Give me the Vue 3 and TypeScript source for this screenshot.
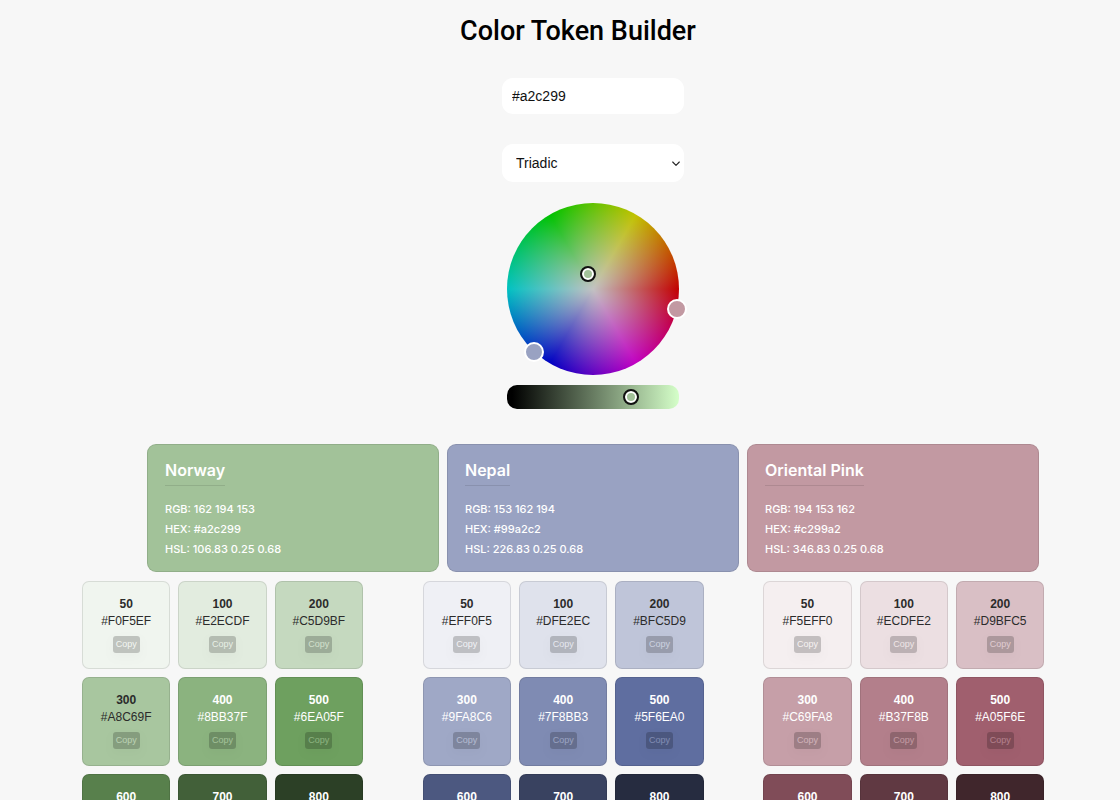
<script setup lang="ts">
import { computed, ref } from 'vue'

interface Swatch {
  step: number
  hex: string
  ink: string
}

interface Palette {
  name: string
  base: string
  rgb: string
  hsl: string
  swatches: Swatch[]
}

const STEPS = [50, 100, 200, 300, 400, 500, 600, 700, 800]

function shades(hexes: string[], darkInkCount: number): Swatch[] {
  return hexes.map((hex, i) => ({
    step: STEPS[i],
    hex,
    ink: i < darkInkCount ? '#2b2b2b' : '#ffffff',
  }))
}

const palettes: Palette[] = [
  {
    name: 'Norway',
    base: '#a2c299',
    rgb: '162 194 153',
    hsl: '106.83 0.25 0.68',
    swatches: shades(
      ['#F0F5EF', '#E2ECDF', '#C5D9BF', '#A8C69F', '#8BB37F', '#6EA05F', '#58804C', '#426039', '#2C4026'],
      4,
    ),
  },
  {
    name: 'Nepal',
    base: '#99a2c2',
    rgb: '153 162 194',
    hsl: '226.83 0.25 0.68',
    swatches: shades(
      ['#EFF0F5', '#DFE2EC', '#BFC5D9', '#9FA8C6', '#7F8BB3', '#5F6EA0', '#4C5880', '#394260', '#262C40'],
      3,
    ),
  },
  {
    name: 'Oriental Pink',
    base: '#c299a2',
    rgb: '194 153 162',
    hsl: '346.83 0.25 0.68',
    swatches: shades(
      ['#F5EFF0', '#ECDFE2', '#D9BFC5', '#C69FA8', '#B37F8B', '#A05F6E', '#804C58', '#603942', '#40262C'],
      3,
    ),
  },
]

const hex = ref('#a2c299')
const harmony = ref('Triadic')
const harmonies = ['Triadic', 'Complementary', 'Analogous', 'Tetradic']
const brightness = ref(76)
const thumbLeft = computed(() => `calc(12px + (100% - 24px) * ${brightness.value / 100})`)

function copy(value: string) {
  navigator.clipboard?.writeText(value)
}
</script>

<template>
  <main class="page">
    <h1 class="title">Color Token Builder</h1>

    <section class="controls">
      <input v-model="hex" class="hex-input" type="text" aria-label="Base color" />
      <div class="select-wrap">
        <select v-model="harmony" class="harmony" aria-label="Harmony">
          <option v-for="h in harmonies" :key="h">{{ h }}</option>
        </select>
        <svg class="chevron" viewBox="0 0 8 6" aria-hidden="true">
          <path d="M.7 1 4 4.3 7.3 1" fill="none" stroke="#222" stroke-width="1.1" stroke-linecap="round" stroke-linejoin="round" />
        </svg>
      </div>
      <div class="wheel">
        <span class="pin pin-second"></span>
        <span class="pin pin-third"></span>
        <span class="handle handle-wheel"></span>
      </div>
      <div class="slider">
        <input v-model="brightness" class="range" type="range" min="0" max="100" aria-label="Brightness" />
        <span class="handle handle-slider" :style="{ left: thumbLeft }"></span>
      </div>
    </section>

    <section class="cards">
      <article v-for="p in palettes" :key="p.name" class="card" :style="{ backgroundColor: p.base }">
        <h2 class="card-title">{{ p.name }}</h2>
        <p class="fact">RGB: {{ p.rgb }}</p>
        <p class="fact">HEX: {{ p.base }}</p>
        <p class="fact">HSL: {{ p.hsl }}</p>
      </article>
    </section>

    <section class="palettes">
      <div v-for="p in palettes" :key="p.name" class="palette">
        <div
          v-for="s in p.swatches"
          :key="s.step"
          class="swatch"
          :style="{ backgroundColor: s.hex, color: s.ink }"
        >
          <strong>{{ s.step }}</strong>
          <span>{{ s.hex }}</span>
          <button class="copy" type="button" @click="copy(s.hex)">Copy</button>
        </div>
      </div>
    </section>
  </main>
</template>

<style>
html {
  background: #f7f7f7;
}
body {
  margin: 0;
}
</style>

<style scoped>
.page {
  box-sizing: border-box;
  padding: 14px 16px 16px 82px;
  font-family: Inter, sans-serif;
  color: #000;
}
.title {
  margin: 0 30px 0 0;
  font-family: Roboto, Inter, sans-serif;
  font-size: 27px;
  font-weight: 500;
  line-height: 34px;
  text-align: center;
}
.controls {
  display: flex;
  flex-direction: column;
  align-items: center;
  margin-top: 30px;
}
.hex-input,
.harmony {
  box-sizing: border-box;
  display: block;
  width: 182px;
  border: 0;
  border-radius: 11px;
  background: #fff;
  color: #111;
  font-family: "Liberation Sans", Arial, sans-serif;
  font-size: 14px;
}
.hex-input {
  height: 36px;
  padding: 0 10px;
}
.select-wrap {
  position: relative;
  margin-top: 30px;
}
.harmony {
  appearance: none;
  padding: 0 20px 0 14px;
  height: 38px;
}
.chevron {
  position: absolute;
  right: 4px;
  top: 17px;
  width: 8px;
  height: 6px;
  pointer-events: none;
}
.wheel {
  position: relative;
  width: 172px;
  height: 172px;
  margin-top: 21px;
  border-radius: 50%;
  background:
    radial-gradient(closest-side, #c2c2c2, rgba(194, 194, 194, 0)),
    conic-gradient(from 90deg, #c20000, #c200c2, #0000c2, #00c2c2, #00c200, #c2c200, #c20000);
}
.pin,
.handle {
  position: absolute;
  box-sizing: border-box;
  border-radius: 50%;
  transform: translate(-50%, -50%);
  pointer-events: none;
}
.pin {
  width: 20px;
  height: 20px;
  border: 2px solid #fff;
}
.pin-second {
  left: 27px;
  top: 149px;
  background: #99a2c2;
}
.pin-third {
  left: 170px;
  top: 106px;
  background: #c299a2;
}
.handle {
  width: 16px;
  height: 16px;
  border: 2px solid #111;
  background: #a2c299;
  box-shadow: inset 0 0 0 2px #fff;
}
.handle-wheel {
  left: 81px;
  top: 71px;
}
.slider {
  position: relative;
  width: 172px;
  height: 24px;
  margin-top: 10px;
  border-radius: 10px;
  background: linear-gradient(to right, #000 3%, #d5ffc9);
}
.range {
  display: block;
  width: 100%;
  height: 100%;
  margin: 0;
  opacity: 0;
}
.handle-slider {
  top: 50%;
}
.cards {
  display: grid;
  grid-template-columns: repeat(3, 1fr);
  gap: 8px;
  max-width: 892px;
  margin: 35px auto 0;
}
.card {
  padding: 15px 17px 12px;
  border: 1px solid rgba(0, 0, 0, 0.1);
  border-radius: 9px;
  color: #fff;
}
.card-title {
  width: fit-content;
  margin: 0 0 13px;
  padding-bottom: 4px;
  border-bottom: 1px solid rgba(0, 0, 0, 0.1);
  font-size: 16px;
  font-weight: 600;
  line-height: 21px;
}
.fact {
  margin: 0;
  font-size: 11px;
  font-weight: 500;
  line-height: 20px;
}
.palettes {
  display: grid;
  grid-template-columns: repeat(3, 1fr);
  margin-top: 9px;
}
.palette {
  display: grid;
  grid-template-columns: repeat(3, 1fr);
  gap: 8px;
  width: 281px;
}
.swatch {
  box-sizing: border-box;
  display: flex;
  flex-direction: column;
  align-items: center;
  aspect-ratio: 1;
  padding-top: 14px;
  border: 1px solid rgba(0, 0, 0, 0.1);
  border-radius: 7px;
  font-family: "Liberation Sans", Arial, sans-serif;
  font-size: 12px;
  line-height: 17px;
}
.copy {
  width: 27px;
  height: 17px;
  margin-top: 6px;
  padding: 0;
  border: 0;
  border-radius: 3px;
  background: #000;
  color: #fff;
  box-shadow: 0 4px 8px rgba(0, 0, 0, 0.1);
  font-family: "Liberation Sans", Arial, sans-serif;
  font-size: 9px;
  line-height: 17px;
  opacity: 0.2;
}
</style>
